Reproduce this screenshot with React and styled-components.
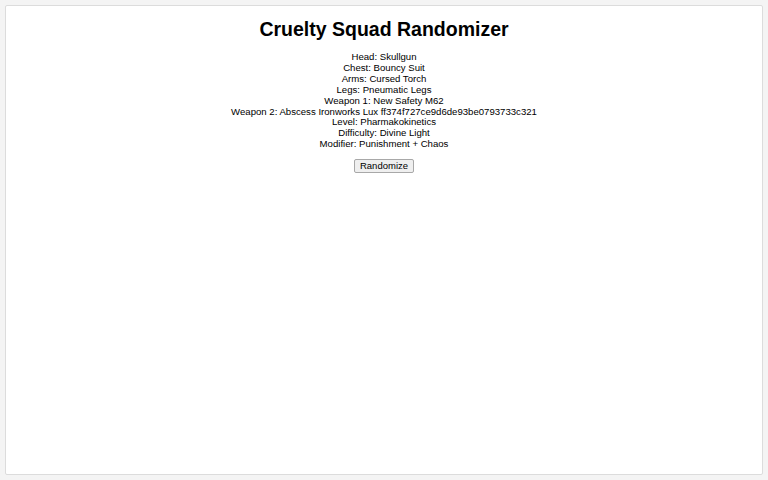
import React, { useState } from 'react';
import styled, { createGlobalStyle } from 'styled-components';

const GlobalStyle = createGlobalStyle`
  html, body {
    margin: 0;
    padding: 0;
    background: #f4f4f4;
    font-family: "Liberation Sans", Arial, sans-serif;
  }
  body {
    padding: 5px;
  }
`;

const Card = styled.main`
  box-sizing: border-box;
  height: 470px;
  background: #fff;
  border: 1px solid #dcdcdc;
  border-radius: 2px;
  text-align: center;
  padding-top: 12px;
`;

const Title = styled.h1`
  margin: 0 0 12px;
  font-size: 19.5px;
  line-height: 22px;
  font-weight: bold;
  color: #000;
`;

const Loadout = styled.div`
  font-size: 9.6px;
  line-height: 10.9px;
  color: #000;
`;

const Button = styled.button`
  margin-top: 9px;
  font-family: "Liberation Sans", Arial, sans-serif;
  font-size: 9.5px;
  line-height: 10px;
  padding: 1px 5px;
  background: #efefef;
  border: 1px solid #a8a8a8;
  border-radius: 2px;
  color: #000;
`;

const loadout = [
  ['Head', 'Skullgun'],
  ['Chest', 'Bouncy Suit'],
  ['Arms', 'Cursed Torch'],
  ['Legs', 'Pneumatic Legs'],
  ['Weapon 1', 'New Safety M62'],
  ['Weapon 2', 'Abscess Ironworks Lux ff374f727ce9d6de93be0793733c321'],
  ['Level', 'Pharmakokinetics'],
  ['Difficulty', 'Divine Light'],
  ['Modifier', 'Punishment + Chaos'],
];

export default function App() {
  const [rows] = useState(loadout);
  return (
    <>
      <GlobalStyle />
      <Card>
        <Title>Cruelty Squad Randomizer</Title>
        <Loadout>
          {rows.map(([label, value]) => (
            <div key={label}>{label}: {value}</div>
          ))}
        </Loadout>
        <Button>Randomize</Button>
      </Card>
    </>
  );
}
